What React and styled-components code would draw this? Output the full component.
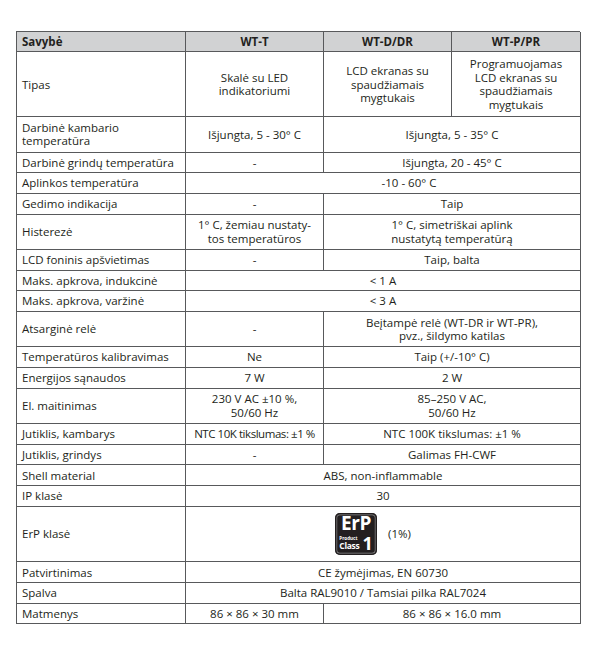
import React from 'react';
import styled, { createGlobalStyle } from 'styled-components';

const INK = '#231f20';
const LINE = '#58595b';

const GlobalStyle = createGlobalStyle`
  html, body {
    margin: 0;
    padding: 0;
    background: #fff;
  }
  body {
    font-family: "Open Sans", "Liberation Sans", sans-serif;
    color: ${INK};
  }
`;

const Page = styled.div`
  padding: 31px 0 0 16px;
`;

const Grid = styled.div`
  display: grid;
  width: 564px;
  box-sizing: border-box;
  grid-template-columns: 169px 138px 128px 129px;
  grid-template-rows: ${(p) => p.rows};
  border-top: 1px solid ${LINE};
  border-left: 1px solid ${LINE};
`;

const Cell = styled.div`
  box-sizing: border-box;
  grid-column: span ${(p) => p.span || 1};
  display: flex;
  align-items: center;
  justify-content: ${(p) => (p.label ? 'flex-start' : 'center')};
  text-align: ${(p) => (p.label ? 'left' : 'center')};
  padding: 0 ${(p) => p.padRight || 3}px 0 ${(p) => (p.label ? 5 : p.padLeft || 3)}px;
  border-right: 1px solid ${LINE};
  border-bottom: 1px solid ${LINE};
  background: ${(p) => (p.head ? '#d1d2d3' : '#fff')};
  font-size: 11.5px;
  line-height: 13.4px;
  font-weight: ${(p) => (p.head ? 700 : 400)};
  letter-spacing: ${(p) => (p.tight ? '-0.45px' : 'normal')};
  white-space: ${(p) => (p.tight ? 'pre' : 'pre-line')};
`;

const ErpGroup = styled.div`
  display: flex;
  align-items: center;
  gap: 11px;
`;

const Badge = styled.div`
  width: 42px;
  height: 42px;
  box-sizing: border-box;
  border-radius: 5px;
  background: ${INK};
  box-shadow: inset 0 0 0 1.5px ${INK}, inset 0 0 0 2.2px #8a8a8a;
  color: #fff;
  display: flex;
  flex-direction: column;
  align-items: center;
  justify-content: space-between;
  padding: 1px 0 2px;
`;

const BadgeTitle = styled.div`
  font-size: 19px;
  line-height: 18px;
  font-weight: 700;
  letter-spacing: -0.4px;
`;

const BadgeBottom = styled.div`
  display: flex;
  align-items: flex-end;
  gap: 3px;
`;

const BadgeWords = styled.div`
  display: flex;
  flex-direction: column;
  align-items: flex-start;
  padding-bottom: 2px;
`;

const Product = styled.span`
  font-size: 4.6px;
  line-height: 6px;
  font-weight: 700;
`;

const Class = styled.span`
  font-size: 8.5px;
  line-height: 10px;
  font-weight: 700;
  letter-spacing: -0.3px;
`;

const One = styled.span`
  font-size: 18px;
  line-height: 19px;
  font-weight: 700;
`;

const Note = styled.span`
  font-size: 11.5px;
`;

const S = 20.7;
const D = 35.3;

const rows = [
  { h: 20.3, head: true, label: 'Savybė', cells: [['WT-T'], ['WT-D/DR'], ['WT-P/PR']] },
  {
    h: 65,
    label: 'Tipas',
    cells: [
      ['Skalė su LED\nindikatoriumi'],
      ['LCD ekranas su\nspaudžiamais\nmygtukais'],
      ['Programuojamas\nLCD ekranas su\nspaudžiamais\nmygtukais'],
    ],
  },
  { h: D, label: 'Darbinė kambario\ntemperatūra', cells: [['Išjungta, 5 - 30° C'], ['Išjungta, 5 - 35° C', 2]] },
  { h: S, label: 'Darbinė grindų temperatūra', cells: [['-'], ['Išjungta, 20 - 45° C', 2]] },
  { h: S, label: 'Aplinkos temperatūra', cells: [['-10 - 60° C', 3, 55]] },
  { h: S, label: 'Gedimo indikacija', cells: [['-'], ['Taip', 2]] },
  {
    h: D,
    label: 'Histerezė',
    cells: [['1° C, žemiau nustaty-\ntos temperatūros'], ['1° C, simetriškai aplink\nnustatytą temperatūrą', 2]],
  },
  { h: S, label: 'LCD foninis apšvietimas', cells: [['-'], ['Taip, balta', 2]] },
  { h: S, label: 'Maks. apkrova, indukcinė', cells: [['< 1 A', 3]] },
  { h: S, label: 'Maks. apkrova, varžinė', cells: [['< 3 A', 3]] },
  {
    h: D,
    label: 'Atsarginė relė',
    cells: [['-'], ['Beįtampė relė (WT-DR ir WT-PR),\npvz., šildymo katilas', 2]],
  },
  { h: S, label: 'Temperatūros kalibravimas', cells: [['Ne'], ['Taip (+/-10° C)', 2]] },
  { h: S, label: 'Energijos sąnaudos', cells: [['7 W'], ['2 W', 2]] },
  { h: D, label: 'El. maitinimas', cells: [['230 V AC ±10 %,\n50/60 Hz'], ['85–250 V AC,\n50/60 Hz', 2]] },
  {
    h: S,
    label: 'Jutiklis, kambarys',
    cells: [['NTC 10K tikslumas: ±1 %', 1, 0, true], ['NTC 100K tikslumas: ±1 %', 2]],
  },
  { h: S, label: 'Jutiklis, grindys', cells: [['-'], ['Galimas FH-CWF', 2]] },
  { h: S, label: 'Shell material', cells: [['ABS, non-inflammable', 3]] },
  { h: S, label: 'IP klasė', cells: [['30', 3]] },
  { h: 55.7, label: 'ErP klasė', erp: true },
  { h: S, label: 'Patvirtinimas', cells: [['CE žymėjimas, EN 60730', 3]] },
  { h: S, label: 'Spalva', cells: [['Balta RAL9010 / Tamsiai pilka RAL7024', 3]] },
  { h: S, label: 'Matmenys', cells: [['86 × 86 × 30 mm'], ['86 × 86 × 16.0 mm', 2]] },
];

const ErpMark = () => (
  <ErpGroup>
    <Badge>
      <BadgeTitle>ErP</BadgeTitle>
      <BadgeBottom>
        <BadgeWords>
          <Product>Product</Product>
          <Class>Class</Class>
        </BadgeWords>
        <One>1</One>
      </BadgeBottom>
    </Badge>
    <Note>(1%)</Note>
  </ErpGroup>
);

const App = () => {
  const template = rows.map((r) => `${r.h}px`).join(' ');

  return (
    <Page>
      <GlobalStyle />
      <Grid rows={template}>
        {rows.map((row, i) => (
          <React.Fragment key={i}>
            <Cell label head={row.head}>
              {row.label}
            </Cell>
            {row.erp ? (
              <Cell span={3} padRight={23}>
                <ErpMark />
              </Cell>
            ) : (
              row.cells.map(([text, span, shift, tight], j) => (
                <Cell key={j} span={span} head={row.head} padLeft={shift} tight={tight}>
                  {text}
                </Cell>
              ))
            )}
          </React.Fragment>
        ))}
      </Grid>
    </Page>
  );
};

export default App;
